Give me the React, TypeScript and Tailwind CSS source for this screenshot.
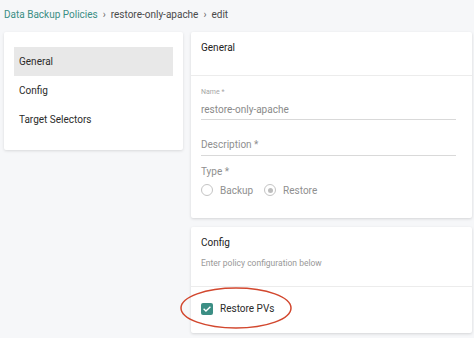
import React from "react";

export default function App() {
  return (
    <div className="w-[474px] h-[338px] bg-[#f6f7f9] overflow-hidden font-['Roboto',_'Noto_Sans',_sans-serif]">
      <div className="h-[30px] pl-[4px] flex items-center text-[10px] leading-[12px]">
        <span className="text-[#3b8e84]">Data Backup Policies</span>
        <span className="mx-[5px] text-[#666]">›</span>
        <span className="text-[#4a4a4a]">restore-only-apache</span>
        <span className="mx-[5px] text-[#666]">›</span>
        <span className="text-[#4a4a4a]">edit</span>
      </div>
      <div className="flex pl-[4px] gap-[8px] mt-[2px]">
        <div className="w-[179px] h-[118px] bg-white rounded-[2px] shadow-[0_1px_3px_rgba(0,0,0,0.12)] px-[10px] py-[15px] flex flex-col">
          <div className="h-[29px] bg-[#e8e8e8] flex items-center px-[5px] text-[10px] text-[#2b2b2b]">General</div>
          <div className="h-[29px] flex items-center px-[5px] text-[10px] text-[#2b2b2b]">Config</div>
          <div className="h-[29px] flex items-center px-[5px] text-[10px] text-[#2b2b2b]">Target Selectors</div>
        </div>
        <div className="w-[281px] flex flex-col gap-[9px]">
          <div className="h-[186px] bg-white rounded-[2px] shadow-[0_1px_3px_rgba(0,0,0,0.14)]">
            <div className="h-[44px] px-[10px] pt-[10px] border-b border-[#ececec]">
              <div className="text-[10px] leading-[12px] text-[#222]">General</div>
            </div>
            <div className="px-[10px]">
              <div className="w-[255px] mt-[12px] border-b border-[#d9d9d9] pb-[2px]">
                <div className="text-[7px] leading-[9px] text-[#a6a6a6]">Name *</div>
                <div className="mt-[6px] text-[10px] leading-[14px] text-[#8a8a8a]">restore-only-apache</div>
              </div>
              <div className="w-[255px] mt-[19px] border-b border-[#d9d9d9] pb-[4px]">
                <div className="text-[10px] leading-[12px] text-[#8f8f8f]">Description *</div>
              </div>
              <div className="mt-[10px] text-[10px] leading-[12px] text-[#8f8f8f]">Type *</div>
              <div className="mt-[5px] flex items-center h-[14px] text-[10px] text-[#8f8f8f]">
                <span className="w-[12px] h-[12px] rounded-full border-[1.5px] border-[#c4c4c4]"></span>
                <span className="ml-[7px]">Backup</span>
                <span className="ml-[11px] w-[12px] h-[12px] rounded-full border-[1.5px] border-[#c4c4c4] flex items-center justify-center">
                  <span className="w-[5px] h-[5px] rounded-full bg-[#bdbdbd]"></span>
                </span>
                <span className="ml-[7px]">Restore</span>
              </div>
            </div>
          </div>
          <div className="relative h-[106px] bg-white rounded-[2px] shadow-[0_1px_3px_rgba(0,0,0,0.14)]">
            <div className="h-[60px] px-[10px] pt-[10px] border-b border-[#ececec]">
              <div className="text-[10px] leading-[12px] text-[#222]">Config</div>
              <div className="mt-[9px] text-[8.5px] leading-[11px] text-[#999]">Enter policy configuration below</div>
            </div>
            <div className="px-[10px] pt-[15px] flex items-center h-[29px]">
              <span className="w-[12px] h-[12px] rounded-[2px] bg-[#3b8e84] flex items-center justify-center">
                <svg width="10" height="10" viewBox="0 0 24 24" fill="none" stroke="white" strokeWidth="3.2" strokeLinecap="square">
                  <path d="M5 12.5l4.5 4.5L19 7.5" />
                </svg>
              </span>
              <span className="ml-[7px] text-[10px] leading-[14px] text-[#2b2b2b]">Restore PVs</span>
            </div>
            <svg className="absolute left-[-12px] top-[59px]" width="114" height="44" viewBox="0 0 114 44" fill="none">
              <ellipse cx="57" cy="22" rx="55" ry="20" stroke="#d2472e" strokeWidth="1.5" />
            </svg>
          </div>
        </div>
      </div>
    </div>
  );
}
